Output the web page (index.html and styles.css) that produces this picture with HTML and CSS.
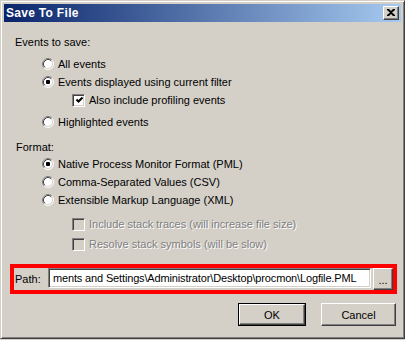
FILE: index.html
```html
<!DOCTYPE html>
<html>
<head>
<meta charset="utf-8">
<link rel="stylesheet" href="styles.css">
</head>
<body>
<div class="window">
  <div class="titlebar">
    <span class="title">Save To File</span>
    <span class="close"><svg width="8" height="7" viewBox="0 0 8 7"><path d="M0 0h2l2 2 2-2h2v1L5 3.5 8 6v1H6L4 5 2 7H0V6l3-2.5L0 1z" fill="#000"/></svg></span>
  </div>
  <div class="content">
    <div class="section">Events to save:</div>
    <div class="row radio-row first"><span class="radio"><svg width="12" height="12" viewBox="0 0 12 12"><circle cx="6" cy="6" r="5" fill="#fff"/><path d="M2.11 9.89A5.5 5.5 0 0 1 9.89 2.11" fill="none" stroke="#808080"/><path d="M9.89 2.11A5.5 5.5 0 0 1 2.11 9.89" fill="none" stroke="#fff"/><path d="M2.82 9.18A4.5 4.5 0 0 1 9.18 2.82" fill="none" stroke="#404040"/><path d="M9.18 2.82A4.5 4.5 0 0 1 2.82 9.18" fill="none" stroke="#d4d0c8"/></svg></span><span>All events</span></div>
    <div class="row radio-row"><span class="radio"><svg width="12" height="12" viewBox="0 0 12 12"><circle cx="6" cy="6" r="5" fill="#fff"/><path d="M2.11 9.89A5.5 5.5 0 0 1 9.89 2.11" fill="none" stroke="#808080"/><path d="M9.89 2.11A5.5 5.5 0 0 1 2.11 9.89" fill="none" stroke="#fff"/><path d="M2.82 9.18A4.5 4.5 0 0 1 9.18 2.82" fill="none" stroke="#404040"/><path d="M9.18 2.82A4.5 4.5 0 0 1 2.82 9.18" fill="none" stroke="#d4d0c8"/><rect x="4" y="4" width="4" height="4" rx="1" fill="#000"/></svg></span><span>Events displayed using current filter</span></div>
    <div class="row check-row"><span class="check"><svg width="9" height="9" viewBox="0 0 9 9"><path d="M1.5 3.5l2 2 4-4" fill="none" stroke="#000" stroke-width="2"/></svg></span><span>Also include profiling events</span></div>
    <div class="row radio-row gap4"><span class="radio"><svg width="12" height="12" viewBox="0 0 12 12"><circle cx="6" cy="6" r="5" fill="#fff"/><path d="M2.11 9.89A5.5 5.5 0 0 1 9.89 2.11" fill="none" stroke="#808080"/><path d="M9.89 2.11A5.5 5.5 0 0 1 2.11 9.89" fill="none" stroke="#fff"/><path d="M2.82 9.18A4.5 4.5 0 0 1 9.18 2.82" fill="none" stroke="#404040"/><path d="M9.18 2.82A4.5 4.5 0 0 1 2.82 9.18" fill="none" stroke="#d4d0c8"/></svg></span><span>Highlighted events</span></div>
    <div class="section format">Format:</div>
    <div class="row radio-row"><span class="radio"><svg width="12" height="12" viewBox="0 0 12 12"><circle cx="6" cy="6" r="5" fill="#fff"/><path d="M2.11 9.89A5.5 5.5 0 0 1 9.89 2.11" fill="none" stroke="#808080"/><path d="M9.89 2.11A5.5 5.5 0 0 1 2.11 9.89" fill="none" stroke="#fff"/><path d="M2.82 9.18A4.5 4.5 0 0 1 9.18 2.82" fill="none" stroke="#404040"/><path d="M9.18 2.82A4.5 4.5 0 0 1 2.82 9.18" fill="none" stroke="#d4d0c8"/><rect x="4" y="4" width="4" height="4" rx="1" fill="#000"/></svg></span><span>Native Process Monitor Format (PML)</span></div>
    <div class="row radio-row"><span class="radio"><svg width="12" height="12" viewBox="0 0 12 12"><circle cx="6" cy="6" r="5" fill="#fff"/><path d="M2.11 9.89A5.5 5.5 0 0 1 9.89 2.11" fill="none" stroke="#808080"/><path d="M9.89 2.11A5.5 5.5 0 0 1 2.11 9.89" fill="none" stroke="#fff"/><path d="M2.82 9.18A4.5 4.5 0 0 1 9.18 2.82" fill="none" stroke="#404040"/><path d="M9.18 2.82A4.5 4.5 0 0 1 2.82 9.18" fill="none" stroke="#d4d0c8"/></svg></span><span>Comma-Separated Values (CSV)</span></div>
    <div class="row radio-row"><span class="radio"><svg width="12" height="12" viewBox="0 0 12 12"><circle cx="6" cy="6" r="5" fill="#fff"/><path d="M2.11 9.89A5.5 5.5 0 0 1 9.89 2.11" fill="none" stroke="#808080"/><path d="M9.89 2.11A5.5 5.5 0 0 1 2.11 9.89" fill="none" stroke="#fff"/><path d="M2.82 9.18A4.5 4.5 0 0 1 9.18 2.82" fill="none" stroke="#404040"/><path d="M9.18 2.82A4.5 4.5 0 0 1 2.82 9.18" fill="none" stroke="#d4d0c8"/></svg></span><span>Extensible Markup Language (XML)</span></div>
    <div class="row check-row disabled gap6"><span class="check off"></span><span>Include stack traces (will increase file size)</span></div>
    <div class="row check-row disabled gap2"><span class="check off"></span><span>Resolve stack symbols (will be slow)</span></div>
    <div class="pathbox">
      <span class="path-label">Path:</span>
      <span class="field">ments and Settings\Administrator\Desktop\procmon\Logfile.PML</span>
      <span class="browse">...</span>
    </div>
    <div class="buttons">
      <span class="btn default"><span class="btn-inner">OK</span></span>
      <span class="btn cancel"><span class="btn-inner">Cancel</span></span>
    </div>
  </div>
</div>
</body>
</html>
```
FILE: styles.css
```css
html, body {
  margin: 0;
  padding: 0;
  background: #d4d0c8;
}
body {
  width: 405px;
  height: 340px;
  overflow: hidden;
  font-family: "Liberation Sans", Arial, sans-serif;
  font-size: 11px;
  color: #000;
}
.window {
  box-sizing: border-box;
  width: 405px;
  height: 339px;
  background: #d4d0c8;
  border-top: 1px solid #d4d0c8;
  border-left: 1px solid #d4d0c8;
  border-right: 1px solid #404040;
  border-bottom: 1px solid #404040;
  box-shadow: inset 1px 1px 0 #fff, inset -1px -1px 0 #808080;
  padding: 3px;
}
.titlebar {
  height: 18px;
  display: flex;
  align-items: center;
  justify-content: space-between;
  padding: 0 2px;
  background: linear-gradient(to right, #0a246a, #a6caf0);
}
.title {
  color: #fff;
  font-weight: bold;
  font-size: 12px;
  letter-spacing: 0.3px;
  line-height: 18px;
}
.close {
  box-sizing: border-box;
  width: 16px;
  height: 14px;
  display: flex;
  align-items: center;
  justify-content: center;
  background: #d4d0c8;
  border-top: 1px solid #fff;
  border-left: 1px solid #fff;
  border-right: 1px solid #404040;
  border-bottom: 1px solid #404040;
  box-shadow: inset -1px -1px 0 #808080;
  padding-bottom: 1px;
}
.content {
  display: flex;
  flex-direction: column;
}
.section {
  height: 16px;
  line-height: 16px;
  margin-left: 11px;
  margin-top: 12px;
}
.section.format {
  margin-left: 12px;
  margin-top: 8px;
}
.row {
  height: 18px;
  display: flex;
  align-items: center;
}
.radio-row {
  margin-left: 38px;
  gap: 4px;
}
.radio-row.first {
  margin-top: 5px;
}
.gap4 { margin-top: 4px; }
.gap6 { margin-top: 6px; }
.gap2 { margin-top: 2px; }
.radio {
  width: 12px;
  height: 12px;
  display: flex;
}
.check-row {
  margin-left: 68px;
  gap: 4px;
}
.check {
  box-sizing: border-box;
  width: 13px;
  height: 13px;
  display: flex;
  align-items: center;
  justify-content: center;
  background: #fff;
  border-top: 1px solid #808080;
  border-left: 1px solid #808080;
  border-right: 1px solid #fff;
  border-bottom: 1px solid #fff;
  box-shadow: inset 1px 1px 0 #404040, inset -1px -1px 0 #d4d0c8;
  padding: 1px 0 0 1px;
}
.check.off {
  background: #d4d0c8;
}
.disabled {
  color: #808080;
  text-shadow: 1px 1px 0 #fff;
}
.pathbox {
  box-sizing: border-box;
  margin-left: 6px;
  margin-top: 11px;
  width: 387px;
  height: 30px;
  border: 4px solid #ff0000;
  display: flex;
  align-items: flex-start;
}
.path-label {
  box-sizing: border-box;
  width: 34px;
  padding-left: 1px;
  height: 22px;
  line-height: 22px;
}
.field {
  box-sizing: border-box;
  width: 323px;
  height: 20px;
  line-height: 16px;
  background: #fff;
  border-top: 1px solid #808080;
  border-left: 1px solid #808080;
  border-right: 1px solid #fff;
  border-bottom: 1px solid #fff;
  box-shadow: inset 1px 1px 0 #404040, inset -1px -1px 0 #d4d0c8;
  padding: 1px 0 0 4px;
  letter-spacing: -0.15px;
  white-space: nowrap;
  overflow: hidden;
}
.browse {
  box-sizing: border-box;
  margin-left: 2px;
  width: 20px;
  height: 22px;
  text-align: center;
  line-height: 22px;
  background: #d4d0c8;
  border-top: 1px solid #fff;
  border-left: 1px solid #fff;
  border-right: 1px solid #404040;
  border-bottom: 1px solid #404040;
  box-shadow: inset -1px -1px 0 #808080;
}
.buttons {
  margin-top: 9px;
  display: flex;
  justify-content: flex-end;
  gap: 15px;
  padding-right: 5px;
}
.btn {
  box-sizing: border-box;
  height: 23px;
  display: flex;
}
.btn.default {
  width: 68px;
  border: 1px solid #000;
}
.btn.cancel {
  width: 75px;
}
.btn-inner {
  box-sizing: border-box;
  flex: 1;
  display: flex;
  align-items: center;
  justify-content: center;
  border-top: 1px solid #fff;
  border-left: 1px solid #fff;
  border-right: 1px solid #404040;
  border-bottom: 1px solid #404040;
  box-shadow: inset -1px -1px 0 #808080;
}
```
